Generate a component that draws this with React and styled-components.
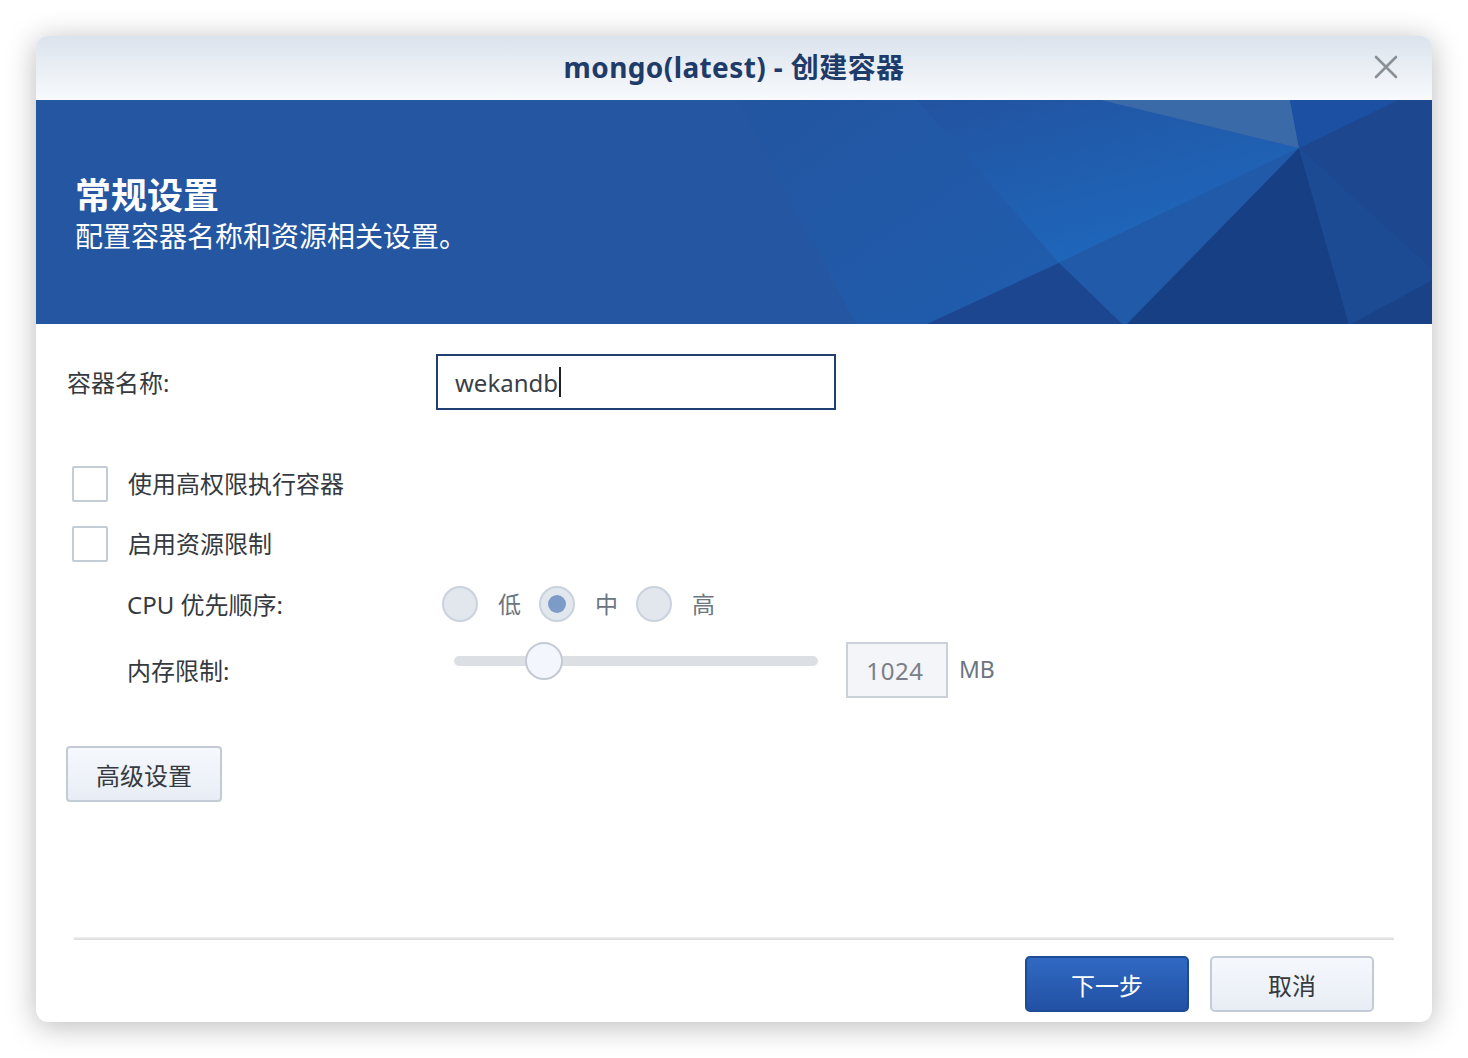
import React from "react";
import styled, { createGlobalStyle } from "styled-components";

const GlobalStyle = createGlobalStyle`
  html, body {
    margin: 0;
    padding: 0;
    background: #ffffff;
  }
  body {
    font-family: "Noto Sans", "Noto Sans CJK SC", sans-serif;
    color: #353a40;
  }
`;

const Page = styled.div`
  width: 1468px;
  height: 1058px;
  padding: 36px;
  box-sizing: border-box;
`;

const Dialog = styled.div`
  width: 1396px;
  height: 986px;
  background: #ffffff;
  border-radius: 12px;
  box-shadow: 0 4px 30px rgba(0, 0, 0, 0.28);
  overflow: hidden;
  display: flex;
  flex-direction: column;
`;

const TitleBar = styled.div`
  height: 64px;
  flex-shrink: 0;
  background: linear-gradient(180deg, #dbe3ed 0%, #f8fafc 100%);
  display: flex;
  align-items: center;
  justify-content: center;
  position: relative;
`;

const Title = styled.h1`
  margin: 0;
  font-size: 28px;
  font-weight: 700;
  color: #1f3b69;
  letter-spacing: 0.4px;
  padding-bottom: 4px;
`;

const CloseButton = styled.button`
  position: absolute;
  right: 32px;
  top: 17px;
  width: 28px;
  height: 28px;
  padding: 0;
  border: none;
  background: none;
  cursor: pointer;
`;

const Banner = styled.div`
  height: 224px;
  flex-shrink: 0;
  background: #2456a2;
  position: relative;
  display: flex;
  flex-direction: column;
  justify-content: center;
  padding: 0 39px 0;
  box-sizing: border-box;
  overflow: hidden;
`;

const BannerArt = styled.svg`
  position: absolute;
  inset: 0;
`;

const BannerTitle = styled.h2`
  position: relative;
  margin: 0;
  font-family: "Noto Sans CJK SC", sans-serif;
  font-size: 36px;
  font-weight: 700;
  line-height: 46px;
  color: #ffffff;
`;

const BannerSub = styled.p`
  position: relative;
  margin: 0;
  font-family: "Noto Sans CJK SC", sans-serif;
  font-size: 28px;
  line-height: 38px;
  color: #ffffff;
`;

const Body = styled.div`
  flex: 1;
  padding: 30px 31px 0;
  display: flex;
  flex-direction: column;
`;

const FieldRow = styled.div`
  display: flex;
  align-items: center;
  height: ${({ $h }) => $h || 56}px;
  margin-top: ${({ $mt }) => $mt || 0}px;
  padding-left: ${({ $indent }) => $indent || 0}px;
`;

const Label = styled.div`
  width: ${({ $w }) => $w}px;
  flex-shrink: 0;
  font-size: 24px;
  color: #353a40;
  padding-bottom: 2px;
  font-family: "Noto Sans", "Noto Sans CJK SC", sans-serif;
`;

const TextInput = styled.div`
  width: 400px;
  height: 56px;
  box-sizing: border-box;
  border: 2px solid #203f72;
  display: flex;
  align-items: center;
  padding-left: 17px;
  font-size: 24px;
  color: #3a3f45;
`;

const Caret = styled.span`
  display: inline-block;
  width: 1.5px;
  height: 30px;
  background: #222;
  margin-left: 1px;
`;

const Checkbox = styled.span`
  width: 36px;
  height: 36px;
  box-sizing: border-box;
  border: 2px solid #c4ccd6;
  border-radius: 2px;
  background: #fff;
  margin-left: 5px;
  flex-shrink: 0;
`;

const CheckLabel = styled.span`
  margin-left: 20px;
  font-size: 24px;
  color: #353a40;
  padding-bottom: 3px;
`;

const RadioGroup = styled.div`
  display: flex;
  align-items: center;
  margin-left: 6px;
`;

const Radio = styled.span`
  width: 36px;
  height: 36px;
  box-sizing: border-box;
  border-radius: 50%;
  border: 2px solid #c9d2dd;
  background: #e2e6ed;
  display: flex;
  align-items: center;
  justify-content: center;
  &::after {
    content: "";
    width: 18px;
    height: 18px;
    border-radius: 50%;
    background: ${({ $checked }) => ($checked ? "#7d9bc7" : "transparent")};
  }
`;

const RadioText = styled.span`
  font-size: 23px;
  color: #6c7580;
  margin: 0 18px 0 20px;
  padding-bottom: 2px;
`;

const SliderTrack = styled.div`
  position: relative;
  width: 364px;
  height: 10px;
  border-radius: 5px;
  background: #dce0e5;
  margin: 0 28px 18px 18px;
`;

const SliderThumb = styled.span`
  position: absolute;
  top: -14px;
  width: 38px;
  height: 38px;
  box-sizing: border-box;
  border-radius: 50%;
  border: 2px solid #c3cad3;
  background: #f3f7fd;
`;

const NumberBox = styled.div`
  width: 102px;
  height: 56px;
  box-sizing: border-box;
  border: 2px solid #cad1da;
  background: #f3f5f8;
  display: flex;
  align-items: center;
  justify-content: center;
  padding: 0 4px 0 0;
  font-size: 24px;
  letter-spacing: 0.6px;
  color: #7a8089;
`;

const Unit = styled.span`
  margin-left: 11px;
  font-size: 23px;
  color: #6c7580;
  padding-bottom: 2px;
`;

const Button = styled.button`
  width: ${({ $w }) => $w || 164}px;
  height: 56px;
  box-sizing: border-box;
  border-radius: 5px;
  font-family: "Noto Sans CJK SC", sans-serif;
  font-size: 24px;
  cursor: pointer;
  border: 2px solid ${({ $primary }) => ($primary ? "#1d4b96" : "#c3cbd6")};
  background: ${({ $primary }) =>
    $primary
      ? "linear-gradient(180deg, #3169c3 0%, #2151a3 100%)"
      : "linear-gradient(180deg, #f5f8fd 0%, #e8edf5 100%)"};
  color: ${({ $primary }) => ($primary ? "#ffffff" : "#353a40")};
`;

const AdvancedButton = styled(Button)`
  margin-top: 48px;
  margin-left: -1px;
  width: 156px;
  border-radius: 4px;
`;

const Footer = styled.div`
  flex-shrink: 0;
  padding: 0 38px 10px;
`;

const Separator = styled.div`
  height: 3px;
  background: linear-gradient(180deg, #f1f1f1 0%, #d9d9d9 100%);
`;

const ButtonRow = styled.div`
  display: flex;
  justify-content: flex-end;
  gap: 21px;
  padding: 16px 20px 0 0;
`;

const Art = () => (
  <BannerArt width="1396" height="224" viewBox="0 0 1396 224">
    <defs>
      <linearGradient id="glow" x1="0" y1="0" x2="0.6" y2="1">
        <stop offset="0" stopColor="#2253a0" />
        <stop offset="1" stopColor="#1e68bd" />
      </linearGradient>
      <linearGradient id="mid" x1="0" y1="0" x2="1" y2="1">
        <stop offset="0" stopColor="#2355a0" />
        <stop offset="1" stopColor="#1f5eb0" />
      </linearGradient>
    </defs>
    <polygon points="702,0 881,0 1023,163 891,224 820,224" fill="url(#mid)" opacity="0.9" />
    <polygon points="881,0 1065,0 1263,48 1023,163" fill="url(#glow)" />
    <polygon points="1065,0 1254,0 1263,48" fill="#3b6aa9" />
    <polygon points="1254,0 1362,0 1263,48" fill="#1b50a3" />
    <polygon points="1362,0 1396,0 1396,170 1263,48" fill="#1d4890" />
    <polygon points="1023,163 1263,48 1091,224 1086,224" fill="#205aa8" />
    <polygon points="1023,163 1086,224 891,224" fill="#1c468f" />
    <polygon points="1263,48 1313,224 1091,224" fill="#173f84" />
    <polygon points="1263,48 1396,170 1396,180 1315,224 1313,224" fill="#1c4a93" />
    <polygon points="1315,224 1396,180 1396,224" fill="#1a4387" />
  </BannerArt>
);

export default function App() {
  return (
    <>
      <GlobalStyle />
      <Page>
        <Dialog>
          <TitleBar>
            <Title>mongo(latest) - 创建容器</Title>
            <CloseButton aria-label="关闭">
              <svg width="28" height="28" viewBox="0 0 28 28">
                <path
                  d="M4 4 L24 24 M24 4 L4 24"
                  stroke="#8a9097"
                  strokeWidth="2.6"
                  strokeLinecap="round"
                />
              </svg>
            </CloseButton>
          </TitleBar>

          <Banner>
            <Art />
            <BannerTitle>常规设置</BannerTitle>
            <BannerSub>配置容器名称和资源相关设置。</BannerSub>
          </Banner>

          <Body>
            <FieldRow>
              <Label $w={369}>容器名称:</Label>
              <TextInput>
                wekandb
                <Caret />
              </TextInput>
            </FieldRow>

            <FieldRow $h={36} $mt={56}>
              <Checkbox />
              <CheckLabel>使用高权限执行容器</CheckLabel>
            </FieldRow>

            <FieldRow $h={36} $mt={24}>
              <Checkbox />
              <CheckLabel>启用资源限制</CheckLabel>
            </FieldRow>

            <FieldRow $h={36} $mt={24} $indent={60}>
              <Label $w={309}>CPU 优先顺序:</Label>
              <RadioGroup>
                <Radio />
                <RadioText>低</RadioText>
                <Radio $checked />
                <RadioText>中</RadioText>
                <Radio />
                <RadioText>高</RadioText>
              </RadioGroup>
            </FieldRow>

            <FieldRow $h={56} $mt={20} $indent={60}>
              <Label $w={309}>内存限制:</Label>
              <SliderTrack>
                <SliderThumb style={{ left: 71 }} />
              </SliderTrack>
              <NumberBox>1024</NumberBox>
              <Unit>MB</Unit>
            </FieldRow>

            <div>
              <AdvancedButton>高级设置</AdvancedButton>
            </div>
          </Body>

          <Footer>
            <Separator />
            <ButtonRow>
              <Button $primary>下一步</Button>
              <Button>取消</Button>
            </ButtonRow>
          </Footer>
        </Dialog>
      </Page>
    </>
  );
}
